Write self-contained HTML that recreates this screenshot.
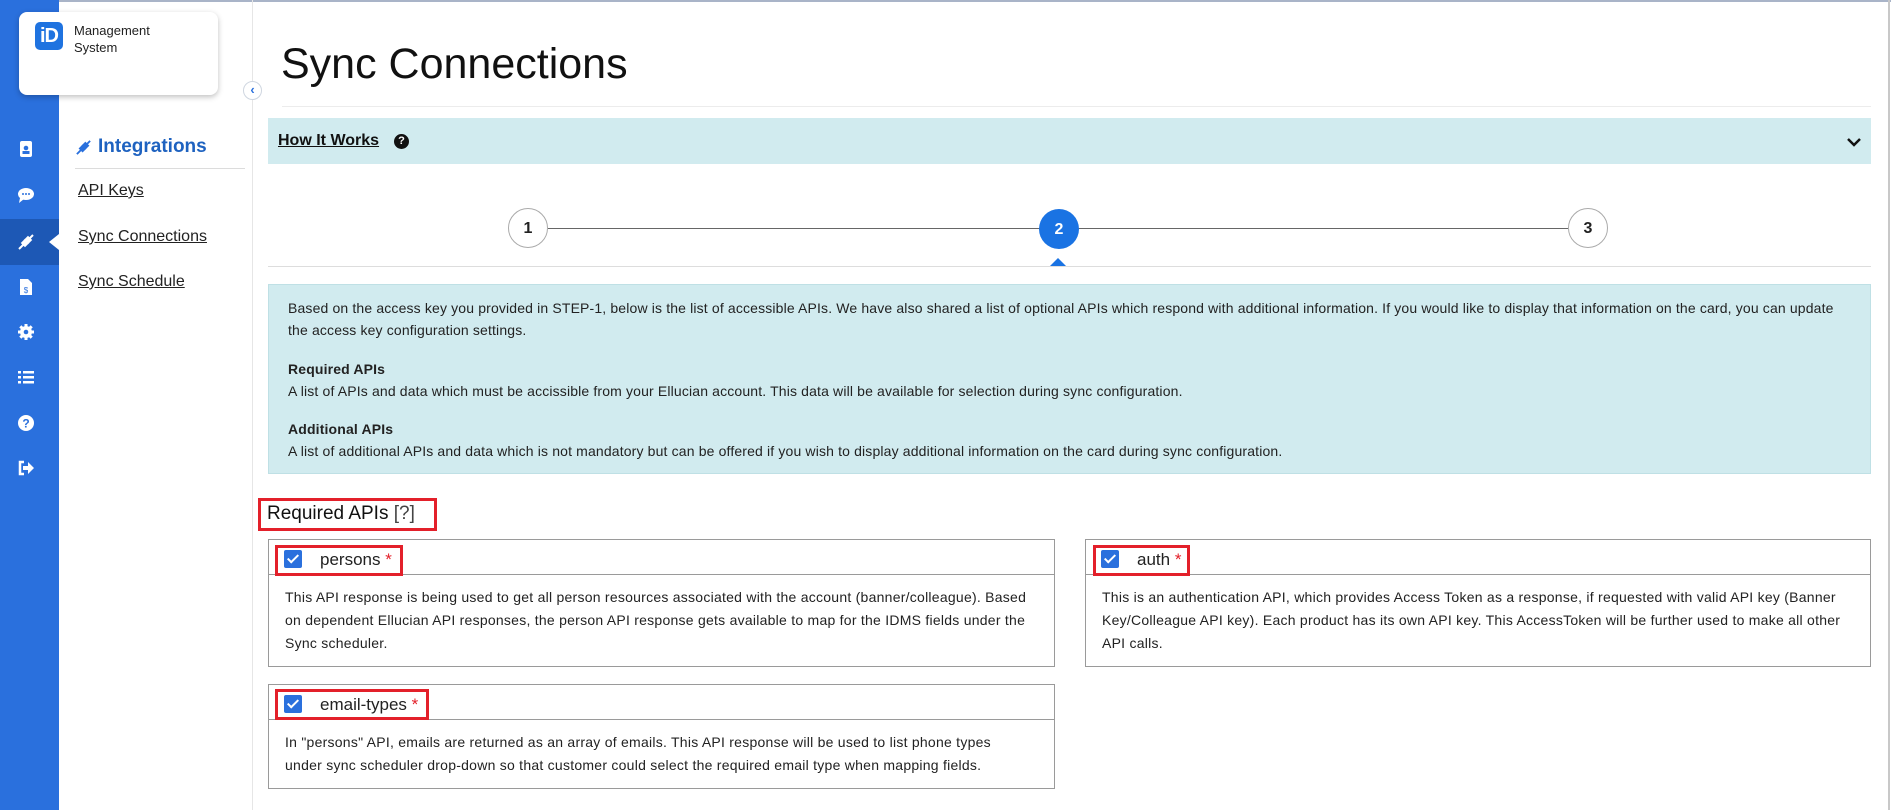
<!DOCTYPE html>
<html><head><meta charset="utf-8"><style>
*{margin:0;padding:0;box-sizing:border-box}
body{width:1891px;height:810px;overflow:hidden;background:#fff;font-family:"Liberation Sans",sans-serif;color:#222;position:relative}
.a{position:absolute}
.side{left:0;top:0;width:59px;height:810px;background:#2a70dd}
.ic{position:absolute;left:17px;width:18px;height:18px}
.nav{left:59px;top:0;width:194px;height:810px;border-right:1px solid #e6e6e6}
.card{border:1px solid #9a9a9a}
.ch{height:35px;border-bottom:1px solid #9a9a9a;position:relative}
.cb{position:absolute;width:18px;height:18px;background:#2a70dd;border-radius:2px}
.cb:after{content:"";position:absolute;left:6px;top:2px;width:4px;height:9px;border:solid #fff;border-width:0 2px 2px 0;transform:rotate(45deg)}
.red{border:3px solid #e3202a}
.bt{font-size:14px;line-height:23px;padding:11px 24px 0 16px;color:#222;letter-spacing:0.25px}
.it{font-size:14px;line-height:22px;color:#222;letter-spacing:0.15px}
</style></head><body>
<div class="a" style="left:0;top:0;width:1891px;height:2px;background:#a9b4c8"></div>
<div class="a side">
<div class="a" style="left:0;top:219px;width:59px;height:46px;background:#1d58b5"></div>
<div class="a" style="left:49px;top:234px;width:0;height:0;border-top:8px solid transparent;border-bottom:8px solid transparent;border-right:10px solid #fff"></div>
<svg class="ic" style="top:140px" viewBox="0 0 18 18"><rect x="3" y="1" width="12" height="16" rx="2" fill="#fff"/><circle cx="9" cy="8" r="2.3" fill="#2a70dd"/><rect x="5.5" y="11" width="7" height="3" fill="#2a70dd"/></svg>
<svg class="ic" style="top:186px" viewBox="0 0 18 18"><ellipse cx="9" cy="8" rx="8" ry="6" fill="#fff"/><path d="M3 12 L2 17 L7 13Z" fill="#fff"/><circle cx="6" cy="8" r="1" fill="#2a70dd"/><circle cx="9" cy="8" r="1" fill="#2a70dd"/><circle cx="12" cy="8" r="1" fill="#2a70dd"/></svg>
<svg class="ic" style="top:233px" viewBox="0 0 18 18"><path d="M2 16 L7 11 M11 7 L16 2" stroke="#fff" stroke-width="2"/><rect x="5" y="7" width="6" height="6" transform="rotate(45 8 10)" fill="#fff"/><rect x="8" y="4" width="6" height="6" transform="rotate(45 11 7)" fill="#fff"/></svg>
<svg class="ic" style="top:278px" viewBox="0 0 18 18"><path d="M3 1 H11 L15 5 V17 H3Z" fill="#fff"/><text x="9" y="15" font-size="8" fill="#2a70dd" text-anchor="middle" font-family="Liberation Sans">$</text></svg>
<svg class="ic" style="top:323px" viewBox="0 0 18 18"><circle cx="9" cy="9" r="6" fill="#fff"/><g stroke="#fff" stroke-width="3"><path d="M9 1V17M1 9H17M3.3 3.3L14.7 14.7M14.7 3.3L3.3 14.7"/></g><circle cx="9" cy="9" r="2.3" fill="#2a70dd"/></svg>
<svg class="ic" style="top:368px" viewBox="0 0 18 18"><g fill="#fff"><rect x="1" y="3" width="3" height="2.5"/><rect x="6" y="3" width="11" height="2.5"/><rect x="1" y="8" width="3" height="2.5"/><rect x="6" y="8" width="11" height="2.5"/><rect x="1" y="13" width="3" height="2.5"/><rect x="6" y="13" width="11" height="2.5"/></g></svg>
<svg class="ic" style="top:414px" viewBox="0 0 18 18"><circle cx="9" cy="9" r="8" fill="#fff"/><text x="9" y="13.5" font-size="12" font-weight="bold" fill="#2a70dd" text-anchor="middle" font-family="Liberation Sans">?</text></svg>
<svg class="ic" style="top:459px" viewBox="0 0 18 18"><path d="M7 3H3V15H7" stroke="#fff" stroke-width="2.5" fill="none"/><path d="M6 7H11V3L17 9L11 15V11H6Z" fill="#fff"/></svg>
</div>
<div class="a nav"></div>
<div class="a" style="left:19px;top:12px;width:199px;height:83px;background:#fff;border-radius:8px;box-shadow:0 2px 6px rgba(0,0,0,.25)">
<div class="a" style="left:16px;top:10px;width:28px;height:28px;background:#1f73e0;border-radius:5px;color:#fff;font-weight:bold;font-size:20px;line-height:28px;text-align:center;letter-spacing:-1px">iD</div>
<div class="a" style="left:55px;top:10px;font-size:13px;line-height:17px;color:#222">Management<br>System</div>
</div>
<div class="a" style="left:243px;top:81px;width:19px;height:19px;border-radius:50%;background:#fff;border:1px solid #cfd6e0;color:#2a70dd;font-size:13px;line-height:16px;text-align:center;font-weight:bold">‹</div>
<svg class="a" style="left:75px;top:139px" width="17" height="17" viewBox="0 0 18 18"><path d="M2 16 L7 11 M11 7 L16 2" stroke="#2a70dd" stroke-width="2"/><rect x="5" y="7" width="6" height="6" transform="rotate(45 8 10)" fill="#2a70dd"/><rect x="8" y="4" width="6" height="6" transform="rotate(45 11 7)" fill="#2a70dd"/></svg>
<div class="a" style="left:98px;top:136px;font-size:19px;font-weight:bold;color:#1e62c0">Integrations</div>
<div class="a" style="left:75px;top:168px;width:170px;height:1px;background:#dcdcdc"></div>
<div class="a" style="left:78px;top:182px;font-size:16px;text-decoration:underline;color:#222">API Keys</div>
<div class="a" style="left:78px;top:228px;font-size:16px;text-decoration:underline;color:#222">Sync Connections</div>
<div class="a" style="left:78px;top:273px;font-size:16px;text-decoration:underline;color:#222">Sync Schedule</div>

<div class="a" style="left:281px;top:40px;font-size:43px;color:#111">Sync Connections</div>
<div class="a" style="left:282px;top:106px;width:1589px;height:1px;background:#ececec"></div>
<div class="a" style="left:268px;top:118px;width:1603px;height:46px;background:#d1ebef">
<div class="a" style="left:10px;top:14px;font-size:16px;font-weight:bold;text-decoration:underline;color:#111">How It Works</div>
<div class="a" style="left:126px;top:16px;width:15px;height:15px;border-radius:50%;background:#111;color:#fff;font-size:11px;font-weight:bold;text-align:center;line-height:15px">?</div>
<svg class="a" style="left:1578px;top:18px" width="16" height="12" viewBox="0 0 16 12"><path d="M2 3L8 9L14 3" stroke="#111" stroke-width="2.5" fill="none"/></svg>
</div>
<div class="a" style="left:548px;top:228px;width:1020px;height:1px;background:#666"></div>
<div class="a" style="left:508px;top:208px;width:40px;height:40px;border-radius:50%;background:#fff;border:1px solid #aaa;text-align:center;line-height:40px;font-weight:bold;font-size:16px">1</div>
<div class="a" style="left:1039px;top:209px;width:40px;height:40px;border-radius:50%;background:#1a73e3;text-align:center;line-height:41px;font-weight:bold;font-size:16px;color:#fff">2</div>
<div class="a" style="left:1568px;top:208px;width:40px;height:40px;border-radius:50%;background:#fff;border:1px solid #aaa;text-align:center;line-height:40px;font-weight:bold;font-size:16px">3</div>
<div class="a" style="left:1050px;top:258px;width:0;height:0;border-left:8px solid transparent;border-right:8px solid transparent;border-bottom:8px solid #1a73e3"></div>
<div class="a" style="left:268px;top:266px;width:1603px;height:1px;background:#ddd"></div>
<div class="a it" style="left:268px;top:284px;width:1603px;height:190px;background:#d1ebef;border:1px solid #bfe0e5;padding:12px 19px">
<div>Based on the access key you provided in STEP-1, below is the list of accessible APIs. We have also shared a list of optional APIs which respond with additional information. If you would like to display that information on the card, you can update the access key configuration settings.</div>
<div style="margin-top:17px;font-weight:bold">Required APIs</div>
<div>A list of APIs and data which must be accissible from your Ellucian account. This data will be available for selection during sync configuration.</div>
<div style="margin-top:16px;font-weight:bold">Additional APIs</div>
<div>A list of additional APIs and data which is not mandatory but can be offered if you wish to display additional information on the card during sync configuration.</div>
</div>
<div class="a red" style="left:258px;top:498px;width:179px;height:33px"></div>
<div class="a" style="left:267px;top:503px;font-size:19px;color:#111">Required APIs <span style="color:#444">[?]</span></div>

<div class="a card" style="left:268px;top:539px;width:787px;height:128px">
<div class="ch"><div class="cb" style="left:15px;top:10px"></div><div class="a" style="left:51px;top:10px;font-size:17px">persons <span style="color:#e3202a">*</span></div></div>
<div class="bt">This API response is being used to get all person resources associated with the account (banner/colleague). Based on dependent Ellucian API responses, the person API response gets available to map for the IDMS fields under the Sync scheduler.</div>
</div>
<div class="a red" style="left:275px;top:545px;width:128px;height:31px"></div>
<div class="a card" style="left:1085px;top:539px;width:786px;height:128px">
<div class="ch"><div class="cb" style="left:15px;top:10px"></div><div class="a" style="left:51px;top:10px;font-size:17px">auth <span style="color:#e3202a">*</span></div></div>
<div class="bt">This is an authentication API, which provides Access Token as a response, if requested with valid API key (Banner Key/Colleague API key). Each product has its own API key. This AccessToken will be further used to make all other API calls.</div>
</div>
<div class="a red" style="left:1093px;top:545px;width:97px;height:31px"></div>
<div class="a card" style="left:268px;top:684px;width:787px;height:105px">
<div class="ch"><div class="cb" style="left:15px;top:10px"></div><div class="a" style="left:51px;top:10px;font-size:17px">email-types <span style="color:#e3202a">*</span></div></div>
<div class="bt">In "persons" API, emails are returned as an array of emails. This API response will be used to list phone types under sync scheduler drop-down so that customer could select the required email type when mapping fields.</div>
</div>
<div class="a red" style="left:275px;top:689px;width:154px;height:31px"></div>
<div class="a" style="left:1888px;top:0;width:2px;height:810px;background:#c8c8c8"></div>
</body></html>
